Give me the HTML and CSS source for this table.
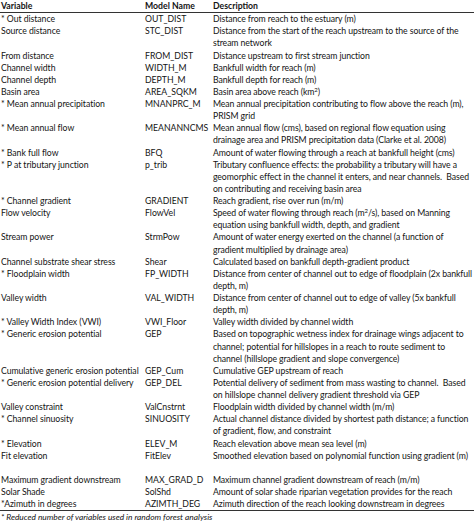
FILE: index.html
```html
<!DOCTYPE html>
<html lang="en">
<head>
<meta charset="utf-8">
<title>Variables</title>
<link rel="stylesheet" href="styles.css">
</head>
<body>
<table class="vars">
  <colgroup>
    <col class="c-var">
    <col class="c-model">
    <col class="c-desc">
  </colgroup>
  <thead>
    <tr><th>Variable</th><th>Model Name</th><th>Description</th></tr>
  </thead>
  <tbody>
    <tr><td>* Out distance</td><td>OUT_DIST</td><td>Distance from reach to the estuary (m)</td></tr>
    <tr><td>Source distance</td><td>STC_DIST</td><td>Distance from the start of the reach upstream to the source of the<br>stream network</td></tr>
    <tr><td>From distance</td><td>FROM_DIST</td><td>Distance upstream to first stream junction</td></tr>
    <tr><td>Channel width</td><td>WIDTH_M</td><td>Bankfull width for reach (m)</td></tr>
    <tr><td>Channel depth</td><td>DEPTH_M</td><td>Bankfull depth for reach (m)</td></tr>
    <tr><td>Basin area</td><td>AREA_SQKM</td><td>Basin area above reach (km<sup>2</sup>)</td></tr>
    <tr><td>* Mean annual precipitation</td><td>MNANPRC_M</td><td>Mean annual precipitation contributing to flow above the reach (m),<br>PRISM grid</td></tr>
    <tr><td>* Mean annual flow</td><td>MEANANNCMS</td><td>Mean annual flow (cms), based on regional flow equation using<br>drainage area and PRISM precipitation data (Clarke et al. 2008)</td></tr>
    <tr><td>* Bank full flow</td><td>BFQ</td><td>Amount of water flowing through a reach at bankfull height (cms)</td></tr>
    <tr><td>* P at tributary junction</td><td>p_trib</td><td>Tributary confluence effects: the probability a tributary will have a<br>geomorphic effect in the channel it enters, and near channels.&nbsp; Based<br>on contributing and receiving basin area</td></tr>
    <tr><td>* Channel gradient</td><td>GRADIENT</td><td>Reach gradient, rise over run (m/m)</td></tr>
    <tr><td>Flow velocity</td><td>FlowVel</td><td>Speed of water flowing through reach (m<sup>2</sup>/s), based on Manning<br>equation using bankfull width, depth, and gradient</td></tr>
    <tr><td>Stream power</td><td>StrmPow</td><td>Amount of water energy exerted on the channel (a function of<br>gradient multiplied by drainage area)</td></tr>
    <tr><td>Channel substrate shear stress</td><td>Shear</td><td>Calculated based on bankfull depth-gradient product</td></tr>
    <tr><td>* Floodplain width</td><td>FP_WIDTH</td><td>Distance from center of channel out to edge of floodplain (2x bankfull<br>depth, m)</td></tr>
    <tr><td>Valley width</td><td>VAL_WIDTH</td><td>Distance from center of channel out to edge of valley (5x bankfull<br>depth, m)</td></tr>
    <tr><td>* Valley Width Index (VWI)</td><td>VWI_Floor</td><td>Valley width divided by channel width</td></tr>
    <tr><td>* Generic erosion potential</td><td>GEP</td><td>Based on topographic wetness index for drainage wings adjacent to<br>channel; potential for hillslopes in a reach to route sediment to<br>channel (hillslope gradient and slope convergence)</td></tr>
    <tr><td>Cumulative generic erosion potential</td><td>GEP_Cum</td><td>Cumulative GEP upstream of reach</td></tr>
    <tr><td>* Generic erosion potential delivery</td><td>GEP_DEL</td><td>Potential delivery of sediment from mass wasting to channel.&nbsp; Based<br>on hillslope channel delivery gradient threshold via GEP</td></tr>
    <tr><td>Valley constraint</td><td>ValCnstrnt</td><td>Floodplain width divided by channel width (m/m)</td></tr>
    <tr><td>* Channel sinuosity</td><td>SINUOSITY</td><td>Actual channel distance divided by shortest path distance; a function<br>of gradient, flow, and constraint</td></tr>
    <tr><td>* Elevation</td><td>ELEV_M</td><td>Reach elevation above mean sea level (m)</td></tr>
    <tr><td>Fit elevation</td><td>FitElev</td><td>Smoothed elevation based on polynomial function using gradient (m)<br>&nbsp;</td></tr>
    <tr><td>Maximum gradient downstream</td><td>MAX_GRAD_D</td><td>Maximum channel gradient downstream of reach (m/m)</td></tr>
    <tr><td>Solar Shade</td><td>SolShd</td><td>Amount of solar shade riparian vegetation provides for the reach</td></tr>
    <tr class="last"><td>*Azimuth in degrees</td><td>AZIMTH_DEG</td><td>Azimuth direction of the reach looking downstream in degrees</td></tr>
  </tbody>
</table>
<p class="note">* Reduced number of variables used in random forest analysis</p>
</body>
</html>
```

FILE: styles.css
```css
html, body {
  margin: 0;
  padding: 0;
  background: #ffffff;
}

body {
  font-family: "Lato", "Open Sans", sans-serif;
  font-size: 8.7px;
  color: #141414;
  width: 474px;
  overflow: hidden;
}

.vars {
  border-collapse: collapse;
  width: 474px;
  table-layout: fixed;
}

.c-var { width: 144px; }
.c-model { width: 68px; }
.c-desc { width: auto; }

.vars th,
.vars td {
  padding: 0 0 0 1px;
  text-align: left;
  vertical-align: top;
  white-space: nowrap;
  line-height: 12.13px;
}

.vars td:first-child {
  letter-spacing: -0.05px;
}

.vars td:last-child {
  letter-spacing: -0.08px;
}

.vars th {
  font-weight: 700;
  border-bottom: 1px solid #333333;
}

.vars tr.last td {
  border-bottom: 1px solid #333333;
}

sup {
  font-size: 6px;
  line-height: 0;
  vertical-align: 3px;
}

.note {
  margin: 0;
  padding: 1px 0 0 1px;
  font-style: italic;
  font-size: 8.4px;
  line-height: 10px;
}
```
